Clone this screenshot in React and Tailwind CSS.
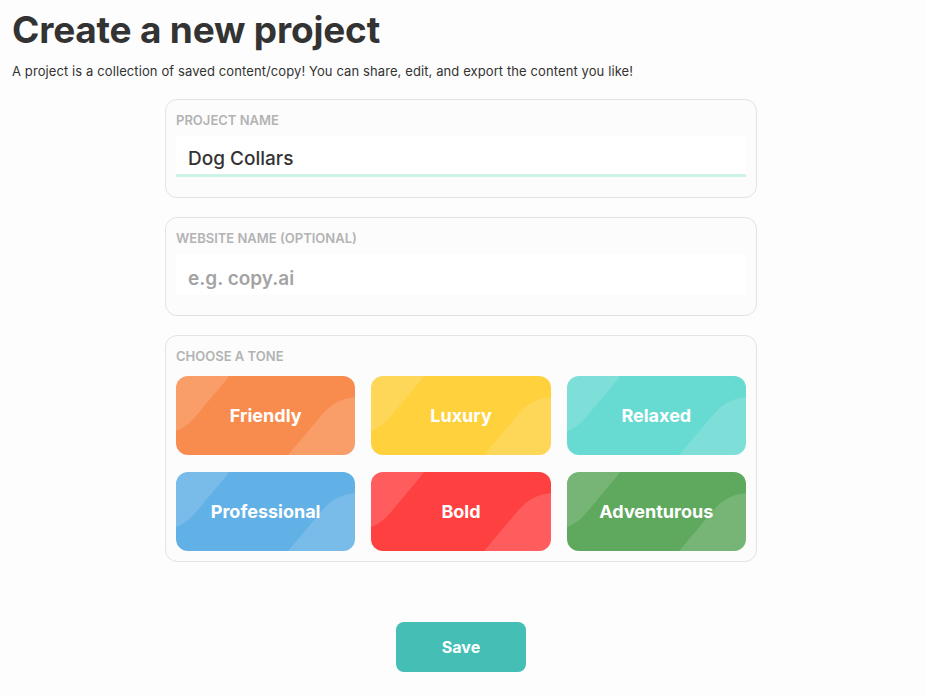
import React from 'react';

const tones = [
  { name: 'Friendly', bg: 'bg-[#f88c4f]' },
  { name: 'Luxury', bg: 'bg-[#fed13d]' },
  { name: 'Relaxed', bg: 'bg-[#67dad2]' },
  { name: 'Professional', bg: 'bg-[#62b1e6]' },
  { name: 'Bold', bg: 'bg-[#fe4041]' },
  { name: 'Adventurous', bg: 'bg-[#5ea95e]' },
];

const ToneButton = ({ name, bg }) => (
  <button className={`relative h-[79px] overflow-hidden rounded-xl ${bg} text-white`}>
    <div className="absolute -left-[46px] -top-[70px] h-[130px] w-[90px] rotate-[40deg] rounded-[40px] bg-white/15"></div>
    <div className="absolute -right-[40px] -bottom-[80px] h-[140px] w-[100px] rotate-[40deg] rounded-[44px] bg-white/15"></div>
    <span className="relative text-lg font-bold">{name}</span>
  </button>
);

const Label = ({ children }) => (
  <div className="text-[13px] font-semibold leading-4 text-[#b3b3b3] uppercase">{children}</div>
);

export default function App() {
  return (
    <div className="min-h-[696px] bg-[#fdfdfd] font-['Inter',sans-serif] text-[#333]">
      <div className="px-3 pt-[8px]">
        <h1 className="text-[37px] font-bold leading-[44px] tracking-[-0.2px]">Create a new project</h1>
        <p className="mt-[11px] text-[13px] leading-4 tracking-[0.1px]">
          A project is a collection of saved content/copy! You can share, edit, and export the content you like!
        </p>
      </div>

      <div className="ml-[165px] mt-[20px] flex w-[592px] flex-col gap-[19px]">
        <div className="rounded-xl border border-[#e3e3e3] bg-[#fcfcfc] px-[10px] pt-3 pb-5">
          <Label>Project Name</Label>
          <div className="mt-2 flex h-[41px] items-center border-b-[3px] border-[#cef2e6] bg-white px-3 pt-2 text-[19px] font-medium">
            Dog Collars
          </div>
        </div>

        <div className="rounded-xl border border-[#e3e3e3] bg-[#fcfcfc] px-[10px] pt-3 pb-5">
          <Label>Website Name (optional)</Label>
          <div className="mt-2 flex h-[41px] items-center bg-white px-3 pt-[10px] text-[19px] font-semibold text-[#a3a3a3]">
            e.g. copy.ai
          </div>
        </div>

        <div className="rounded-xl border border-[#e3e3e3] bg-[#fcfcfc] px-[10px] pt-3 pb-[10px]">
          <Label>Choose a tone</Label>
          <div className="mt-3 grid grid-cols-3 gap-x-4 gap-y-[17px]">
            {tones.map((t) => (
              <ToneButton key={t.name} name={t.name} bg={t.bg} />
            ))}
          </div>
        </div>
      </div>

      <div className="mt-[60px] pl-[396px]">
        <button className="h-[50px] w-[130px] rounded-lg bg-[#45bfb5] text-base font-bold text-white">Save</button>
      </div>
    </div>
  );
}
